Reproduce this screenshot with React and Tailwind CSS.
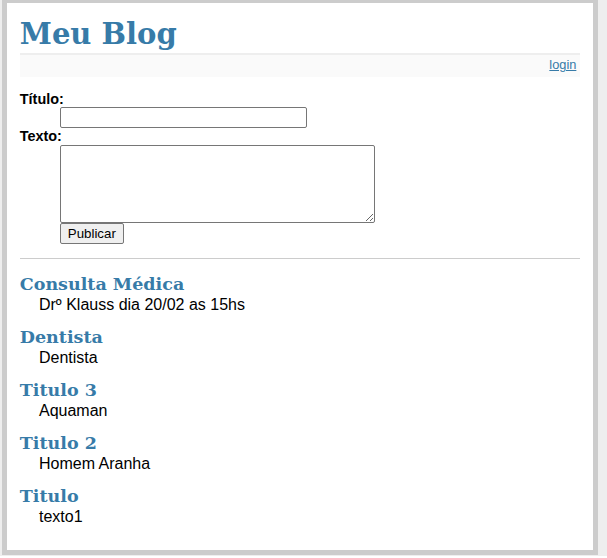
import React from "react";

const entries = [
  { title: "Consulta Médica", text: "Drº Klauss dia 20/02 as 15hs" },
  { title: "Dentista", text: "Dentista" },
  { title: "Titulo 3", text: "Aquaman" },
  { title: "Titulo 2", text: "Homem Aranha" },
  { title: "Titulo", text: "texto1" },
];

const serif = "font-['DejaVu_Serif',Georgia,serif] font-bold text-[#377ba8]";

const App = () => {
  return (
    <div className="min-h-[558px] bg-[#eee] font-['Liberation_Sans',Arial,sans-serif] text-black">
      <div className="ml-[2px] -mt-[2px] w-[596px] border-[5px] border-[#ccc] bg-white p-[12.8px]">
        <h1 className={serif + " text-[29px] leading-[36.8px] border-b-2 border-[#eee]"}>
          Meu Blog
        </h1>
        <div className="mb-[14px] bg-[#fafafa] p-[3.84px] text-right text-[12.8px] leading-[14.7px]">
          <a href="#" className="text-[#377ba8] underline">
            login
          </a>
        </div>

        <form className="border-b border-[#ccc] text-[14.4px]">
          <dl className="pb-[14px] font-bold">
            <dt className="leading-[16.5px]">Título:</dt>
            <dd className="ml-[40px]">
              <input
                type="text"
                className="block h-[21px] w-[247px] rounded-[2px] border border-[#767676] px-[2px] text-[13.3px] font-normal"
              />
            </dd>
            <dt className="leading-[16.5px]">Texto:</dt>
            <dd className="ml-[40px]">
              <textarea
                rows={5}
                className="block h-[78px] w-[315px] rounded-[2px] border border-[#767676] px-[2px] text-[13.3px] font-normal"
              />
            </dd>
            <dd className="ml-[40px]">
              <button
                type="button"
                className="block h-[21px] w-[64px] rounded-[2px] border border-[#767676] bg-[#efefef] text-[13.3px] font-normal leading-[19px]"
              >
                Publicar
              </button>
            </dd>
          </dl>
        </form>

        <ul className="flex flex-col gap-[12.8px] pt-[14.8px] pb-[11px]">
          {entries.map((entry) => (
            <li key={entry.title} className="px-[19.2px] text-[16px] leading-[18.4px]">
              <h2 className={serif + " -ml-[19.2px] text-[17.5px] leading-[21.8px]"}>
                {entry.title}
              </h2>
              {entry.text}
            </li>
          ))}
        </ul>
      </div>
    </div>
  );
};

export default App;
